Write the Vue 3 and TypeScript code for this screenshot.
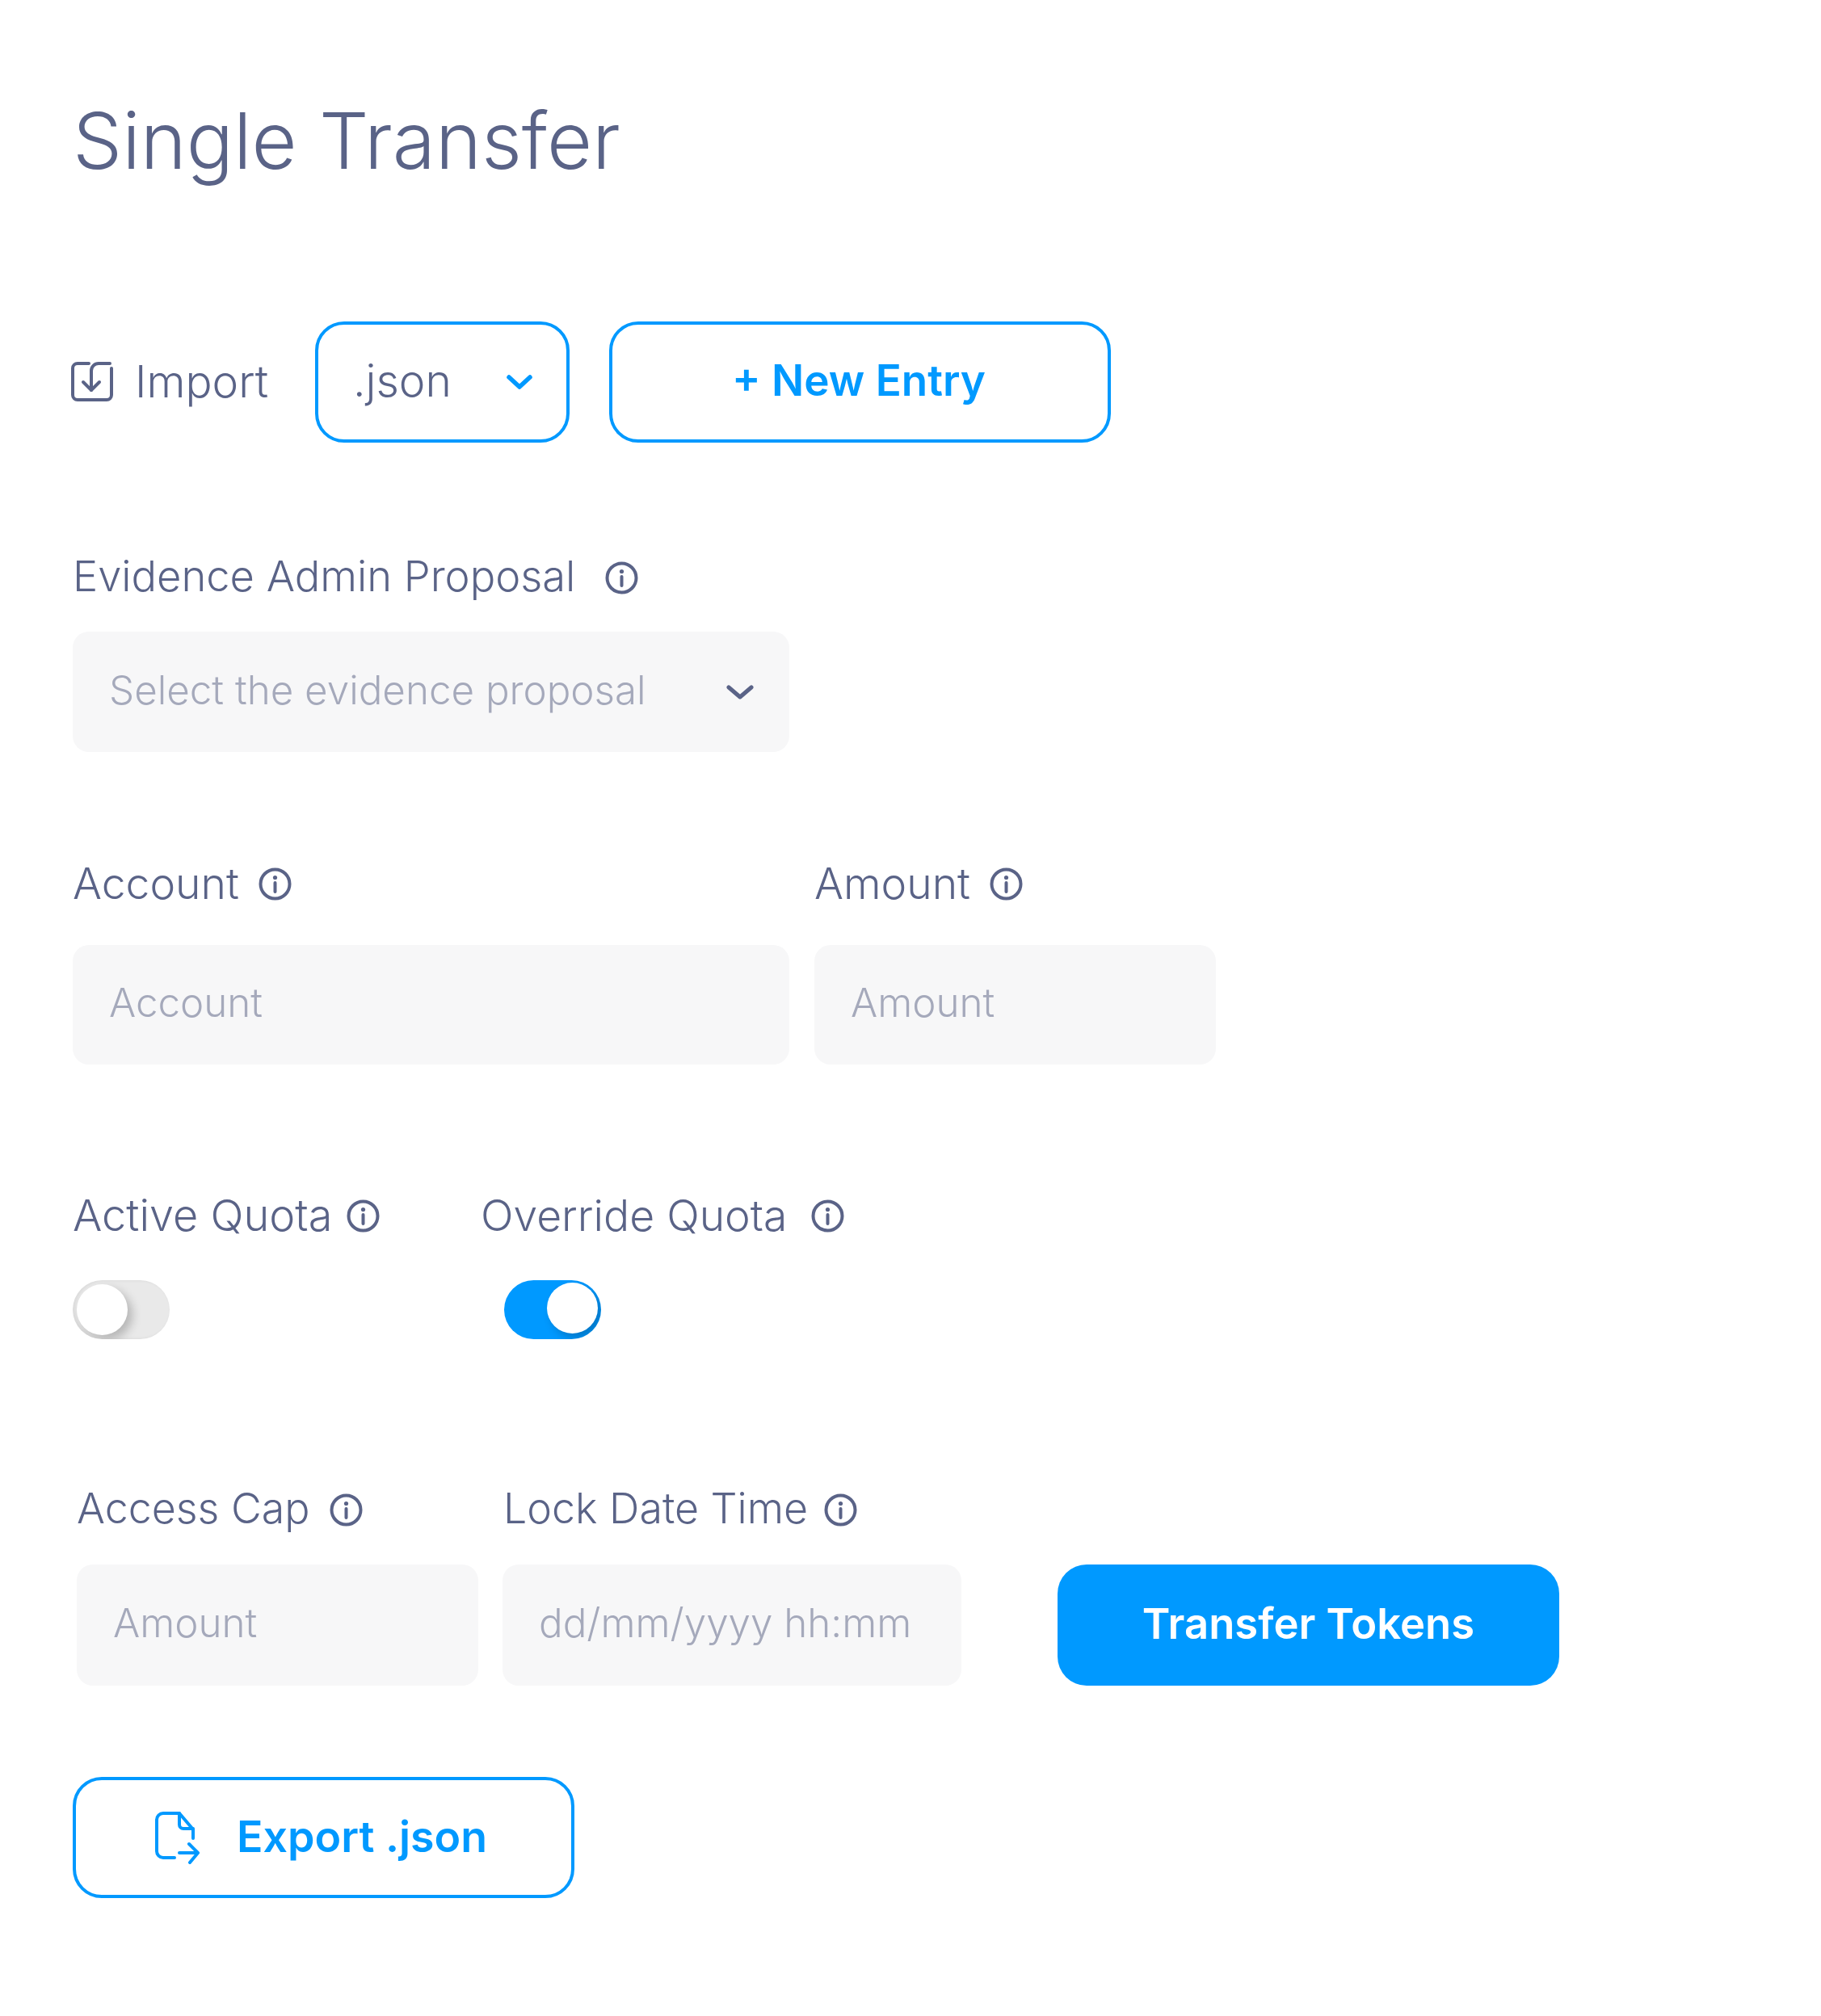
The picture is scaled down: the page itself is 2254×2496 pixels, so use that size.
<script setup lang="ts">
const infoCircle = 'M20.5 2.5a18 18 0 1 0 0 36a18 18 0 1 0 0-36z'
</script>

<template>
  <main class="page">
    <h1 class="title">Single Transfer</h1>

    <section class="toolbar">
      <div class="import">
        <svg class="import-icon" width="56" height="54" viewBox="0 0 56 54" fill="none" stroke="#5a6387" stroke-width="4" stroke-linecap="round" stroke-linejoin="round">
          <path d="M24 4H10a6 6 0 0 0-6 6V43a6 6 0 0 0 6 6H46a6 6 0 0 0 6-6V10" />
          <path d="M50 4H36a9 9 0 0 0-9 9V37" />
          <path d="M17 27L27 37L37 27" />
        </svg>
        <span>Import</span>
      </div>
      <button class="outline json-btn" type="button">
        <span>.json</span>
        <svg width="34" height="20" viewBox="0 0 34 20" fill="none" stroke="#0099ff" stroke-width="5.5" stroke-linecap="round" stroke-linejoin="round"><path d="M4 4L17 16L30 4" /></svg>
      </button>
      <button class="outline strong new-btn" type="button">+ New Entry</button>
    </section>

    <section class="proposal">
      <label class="label t-mid"><span>Evidence Admin Proposal</span>
        <svg class="info g-37 low" width="41" height="41" viewBox="0 0 41 41" fill="none" stroke="#5a6387" stroke-width="4"><path :d="infoCircle" /><path d="M20.5 19V30" stroke-linecap="round" /><circle cx="20.5" cy="12.5" r="2.6" fill="#5a6387" stroke="none" /></svg>
      </label>
      <div class="field select">
        <span>Select the evidence proposal</span>
        <svg width="34" height="20" viewBox="0 0 34 20" fill="none" stroke="#5a6387" stroke-width="5" stroke-linecap="round" stroke-linejoin="round"><path d="M3 4L17 16L31 4" /></svg>
      </div>
    </section>

    <section class="pair">
      <div class="col">
        <label class="label t-wide"><span>Account</span>
          <svg class="info g-24" width="41" height="41" viewBox="0 0 41 41" fill="none" stroke="#5a6387" stroke-width="4"><path :d="infoCircle" /><path d="M20.5 19V30" stroke-linecap="round" /><circle cx="20.5" cy="12.5" r="2.6" fill="#5a6387" stroke="none" /></svg>
        </label>
        <div class="field w-account">Account</div>
      </div>
      <div class="col">
        <label class="label t-wide"><span>Amount</span>
          <svg class="info g-24" width="41" height="41" viewBox="0 0 41 41" fill="none" stroke="#5a6387" stroke-width="4"><path :d="infoCircle" /><path d="M20.5 19V30" stroke-linecap="round" /><circle cx="20.5" cy="12.5" r="2.6" fill="#5a6387" stroke="none" /></svg>
        </label>
        <div class="field w-amount">Amount</div>
      </div>
    </section>

    <section class="quotas">
      <div class="quota q-active">
        <label class="label t-wider"><span>Active Quota</span>
          <svg class="info g-18" width="41" height="41" viewBox="0 0 41 41" fill="none" stroke="#5a6387" stroke-width="4"><path :d="infoCircle" /><path d="M20.5 19V30" stroke-linecap="round" /><circle cx="20.5" cy="12.5" r="2.6" fill="#5a6387" stroke="none" /></svg>
        </label>
        <div class="toggle"><span class="knob"></span></div>
      </div>
      <div class="quota">
        <label class="label t-wide"><span>Override Quota</span>
          <svg class="info g-30" width="41" height="41" viewBox="0 0 41 41" fill="none" stroke="#5a6387" stroke-width="4"><path :d="infoCircle" /><path d="M20.5 19V30" stroke-linecap="round" /><circle cx="20.5" cy="12.5" r="2.6" fill="#5a6387" stroke="none" /></svg>
        </label>
        <div class="toggle on"><span class="knob"></span></div>
      </div>
    </section>

    <section class="access">
      <div class="col">
        <label class="label t-narrow"><span>Access Cap</span>
          <svg class="info g-25 low-s" width="41" height="41" viewBox="0 0 41 41" fill="none" stroke="#5a6387" stroke-width="4"><path :d="infoCircle" /><path d="M20.5 19V30" stroke-linecap="round" /><circle cx="20.5" cy="12.5" r="2.6" fill="#5a6387" stroke="none" /></svg>
        </label>
        <div class="field w-amount">Amount</div>
      </div>
      <div class="col lock">
        <label class="label t-narrow"><span>Lock Date Time</span>
          <svg class="info g-20 low-s" width="41" height="41" viewBox="0 0 41 41" fill="none" stroke="#5a6387" stroke-width="4"><path :d="infoCircle" /><path d="M20.5 19V30" stroke-linecap="round" /><circle cx="20.5" cy="12.5" r="2.6" fill="#5a6387" stroke="none" /></svg>
        </label>
        <div class="field w-date">dd/mm/yyyy hh:mm</div>
      </div>
      <button class="primary" type="button">Transfer Tokens</button>
    </section>

    <button class="outline strong export" type="button">
      <svg width="60" height="72" viewBox="0 0 60 72" fill="none" stroke="#0099ff" stroke-width="4" stroke-linecap="round" stroke-linejoin="round">
        <path d="M26 61H12a8 8 0 0 1-8-8V14a8 8 0 0 1 8-8H32L49 26V37" />
        <path d="M32 6V20a5 5 0 0 0 5 5H49" />
        <path d="M32 55H55M44 44L55 55L45 67" />
      </svg>
      <span>Export .json</span>
    </button>
  </main>
</template>

<style>
html, body { margin: 0; background: #fff; }
</style>

<style scoped>
.page {
  box-sizing: border-box;
  width: 2254px;
  height: 2496px;
  padding: 113px 0 0 90px;
  font-family: Inter, "Liberation Sans", sans-serif;
  font-weight: 350;
  color: #5a6387;
  background: #fff;
}
.title {
  margin: 0;
  height: 121px;
  font-size: 96.8px;
  line-height: 121px;
  font-weight: 350;
}
.toolbar {
  margin-top: 164px;
  display: flex;
  align-items: center;
  height: 150px;
}
.import {
  display: flex;
  align-items: center;
  width: 300px;
  font-size: 55px;
}
.import span { padding-bottom: 2px; }
.import-icon { margin: 0 25px 0 -4px; }
button { font-family: inherit; cursor: pointer; }
.outline {
  box-sizing: border-box;
  height: 150px;
  padding: 0 0 5px;
  background: #fff;
  border: 4px solid #0099ff;
  border-radius: 36px;
  font-size: 53px;
  font-weight: 350;
  color: #5a6387;
}
.strong { color: #0099ff; font-weight: 600; }
.json-btn {
  width: 315px;
  padding: 0 41px 0 43px;
  display: flex;
  align-items: center;
  justify-content: space-between;
  font-size: 55px;
}
.json-btn span { padding-bottom: 5px; }
.new-btn { width: 621px; margin-left: 49px; padding-right: 3px; }
.label {
  display: flex;
  align-items: center;
  height: 60px;
  font-size: 52px;
  line-height: 60px;
  white-space: nowrap;
}
.t-mid { font-size: 52.4px; }
.t-wide { font-size: 53.4px; }
.t-wider { font-size: 54px; }
.t-narrow { font-size: 51.9px; }
.g-37 { margin-left: 37px; }
.g-30 { margin-left: 30px; }
.g-25 { margin-left: 25px; }
.g-24 { margin-left: 24px; }
.g-20 { margin-left: 20px; }
.g-18 { margin-left: 18px; }
.low { margin-top: 4px; }
.low-s { margin-top: 2px; }
.proposal { margin-top: 135px; }
.field {
  box-sizing: border-box;
  height: 148px;
  background: #f7f7f8;
  border-radius: 20px;
  padding: 0 45px 6px;
  display: flex;
  align-items: center;
  font-size: 49.3px;
  color: #a5a9bb;
  white-space: nowrap;
}
.proposal .field { margin-top: 39px; height: 149px; }
.select { width: 887px; justify-content: space-between; }
.select svg { margin: 6px -1px 0 0; }
.pair { margin-top: 133px; display: flex; gap: 31px; }
.pair .field { margin-top: 46px; }
.w-account { width: 887px; }
.w-amount { width: 497px; }
.w-date { width: 568px; }
.quotas { margin-top: 157px; display: flex; }
.q-active { width: 505px; }
.toggle {
  position: relative;
  width: 120px;
  height: 73px;
  margin-top: 50px;
  border-radius: 37px;
  background: #e9e9e9;
  overflow: hidden;
  box-shadow: inset 2px 0 4px rgba(0, 0, 0, 0.08);
}
.toggle.on { margin-left: 29px; background: #0099ff; box-shadow: none; }
.knob {
  position: absolute;
  left: 5px;
  top: 5px;
  width: 63px;
  height: 63px;
  border-radius: 50%;
  background: #fff;
  box-shadow: 6px 6px 12px rgba(0, 0, 0, 0.22);
}
.on .knob { left: 53px; top: 3px; }
.access {
  margin-top: 180px;
  margin-left: 5px;
  display: flex;
  align-items: flex-end;
}
.access .col:nth-child(2) { margin-left: 30px; }
.access .field { margin-top: 39px; height: 150px; }
.access .label { margin-left: 0; }
.access .lock .label { margin-left: 1px; }
.primary {
  width: 621px;
  height: 150px;
  margin-left: 119px;
  padding: 0 0 5px;
  border: 0;
  border-radius: 36px;
  background: #0099ff;
  color: #fff;
  font-size: 52.6px;
  font-weight: 600;
}
.export {
  display: flex;
  align-items: center;
  justify-content: center;
  gap: 43px;
  width: 621px;
  height: 150px;
  margin-top: 113px;
  padding: 0 8px 0 0;
  font-size: 53.7px;
}
.export span { padding-bottom: 4px; }
</style>
